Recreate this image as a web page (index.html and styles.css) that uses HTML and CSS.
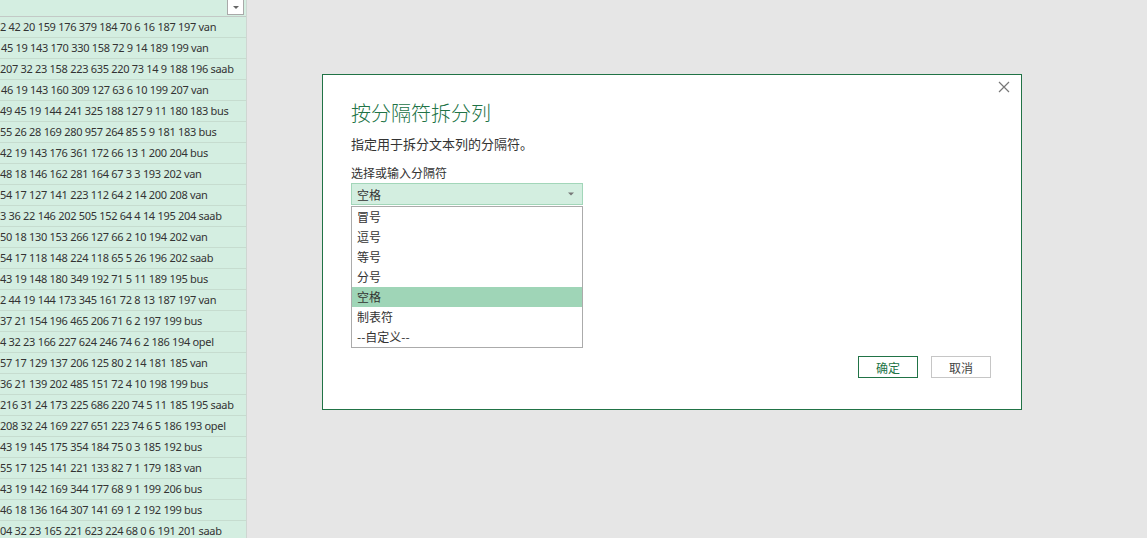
FILE: index.html
```html
<!DOCTYPE html>
<html lang="zh-CN">
<head>
<meta charset="utf-8">
<title>按分隔符拆分列</title>
<link rel="stylesheet" href="styles.css">
</head>
<body>
<div class="sheet">
  <div class="col-head">
    <span class="filter-btn"><svg width="8" height="5" viewBox="0 0 8 5"><path d="M1 1h6L4 4z" fill="#666"/></svg></span>
  </div>
  <div class="row">2 42 20 159 176 379 184 70 6 16 187 197 van</div>
  <div class="row s1">45 19 143 170 330 158 72 9 14 189 199 van</div>
  <div class="row">207 32 23 158 223 635 220 73 14 9 188 196 saab</div>
  <div class="row s1">46 19 143 160 309 127 63 6 10 199 207 van</div>
  <div class="row">49 45 19 144 241 325 188 127 9 11 180 183 bus</div>
  <div class="row">55 26 28 169 280 957 264 85 5 9 181 183 bus</div>
  <div class="row">42 19 143 176 361 172 66 13 1 200 204 bus</div>
  <div class="row">48 18 146 162 281 164 67 3 3 193 202 van</div>
  <div class="row">54 17 127 141 223 112 64 2 14 200 208 van</div>
  <div class="row">3 36 22 146 202 505 152 64 4 14 195 204 saab</div>
  <div class="row">50 18 130 153 266 127 66 2 10 194 202 van</div>
  <div class="row">54 17 118 148 224 118 65 5 26 196 202 saab</div>
  <div class="row">43 19 148 180 349 192 71 5 11 189 195 bus</div>
  <div class="row">2 44 19 144 173 345 161 72 8 13 187 197 van</div>
  <div class="row">37 21 154 196 465 206 71 6 2 197 199 bus</div>
  <div class="row">4 32 23 166 227 624 246 74 6 2 186 194 opel</div>
  <div class="row">57 17 129 137 206 125 80 2 14 181 185 van</div>
  <div class="row">36 21 139 202 485 151 72 4 10 198 199 bus</div>
  <div class="row">216 31 24 173 225 686 220 74 5 11 185 195 saab</div>
  <div class="row">208 32 24 169 227 651 223 74 6 5 186 193 opel</div>
  <div class="row">43 19 145 175 354 184 75 0 3 185 192 bus</div>
  <div class="row">55 17 125 141 221 133 82 7 1 179 183 van</div>
  <div class="row">43 19 142 169 344 177 68 9 1 199 206 bus</div>
  <div class="row">46 18 136 164 307 141 69 1 2 192 199 bus</div>
  <div class="row">04 32 23 165 221 623 224 68 0 6 191 201 saab</div>
</div>

<div class="dialog">
  <button class="close" aria-label="关闭"><svg width="12" height="12" viewBox="0 0 12 12"><path d="M1 1L11 11M11 1L1 11" stroke="#777" stroke-width="1.2" fill="none"/></svg></button>
  <h1 class="title">按分隔符拆分列</h1>
  <p class="desc">指定用于拆分文本列的分隔符。</p>
  <div class="label">选择或输入分隔符</div>
  <div class="combo">
    <span>空格</span>
    <svg width="6" height="4" viewBox="0 0 6 4"><path d="M0 0.5h6L3 3.5z" fill="#777"/></svg>
  </div>
  <ul class="options">
    <li>冒号</li>
    <li>逗号</li>
    <li>等号</li>
    <li>分号</li>
    <li class="selected">空格</li>
    <li>制表符</li>
    <li>--自定义--</li>
  </ul>
  <div class="actions">
    <button class="btn primary">确定</button>
    <button class="btn">取消</button>
  </div>
</div>
</body>
</html>
```

FILE: styles.css
```css
html, body {
  margin: 0;
  padding: 0;
  height: 100%;
}
body {
  background: #e6e6e6;
  overflow: hidden;
  font-family: "Noto Sans", "Noto Sans CJK SC", sans-serif;
  color: #333;
}
.sheet {
  width: 246px;
  height: 538px;
  background: #d4eee1;
  border-right: 1px solid #cfd6d2;
  overflow: hidden;
}
.col-head {
  height: 16px;
  border-bottom: 1px solid #c3c9c6;
  display: flex;
  justify-content: flex-end;
  padding-right: 2px;
}
.filter-btn {
  width: 15px;
  height: 14px;
  margin-top: -1px;
  background: #fff;
  border: 1px solid #a9a9a9;
  display: flex;
  align-items: center;
  justify-content: center;
}
.row {
  height: 20px;
  line-height: 20px;
  border-bottom: 1px solid #c6dccf;
  font-size: 11px;
  letter-spacing: -0.3px;
  white-space: nowrap;
  color: #333;
  padding-left: 0;
}
.row.s1 { padding-left: 1px; }

.dialog {
  position: absolute;
  left: 322px;
  top: 74px;
  width: 698px;
  height: 334px;
  background: #fff;
  border: 1px solid #217346;
  box-sizing: content-box;
  padding: 0;
  display: flex;
  flex-direction: column;
  font-family: "Noto Sans CJK SC", sans-serif;
}
.close {
  position: absolute;
  right: 9px;
  top: 4px;
  width: 16px;
  height: 16px;
  padding: 0;
  border: 0;
  background: transparent;
  display: flex;
  align-items: center;
  justify-content: center;
}
.title {
  margin: 26px 0 0 28px;
  font-size: 20px;
  line-height: 24px;
  font-weight: 300;
  color: #217346;
}
.desc {
  margin: 10px 0 0 28px;
  font-size: 13px;
  line-height: 18px;
  color: #333;
}
.label {
  margin: 12px 0 0 28px;
  font-size: 12px;
  line-height: 16px;
  color: #333;
}
.combo {
  margin: 2px 0 0 28px;
  height: 20px;
  background: #d3eee0;
  border: 1px solid #a2d6b9;
  display: flex;
  align-items: center;
  justify-content: space-between;
  padding: 0 8px 0 5px;
  box-sizing: content-box;
  width: 217px;
  font-size: 12px;
  color: #333;
}
.options {
  list-style: none;
  margin: 1px 0 0 28px;
  padding: 0;
  width: 230px;
  border: 1px solid #ababab;
}
.options li {
  height: 20px;
  line-height: 20px;
  padding-left: 5px;
  font-size: 12px;
  color: #333;
}
.options li.selected {
  background: #9fd5b7;
}
.actions {
  margin: 8px 30px 0 0;
  display: flex;
  justify-content: flex-end;
  gap: 13px;
}
.btn {
  width: 60px;
  height: 22px;
  padding: 0;
  background: #fff;
  border: 1px solid #c6c6c6;
  font-family: "Noto Sans CJK SC", sans-serif;
  font-size: 12px;
  color: #444;
}
.btn.primary {
  border-color: #217346;
  color: #217346;
}
```
